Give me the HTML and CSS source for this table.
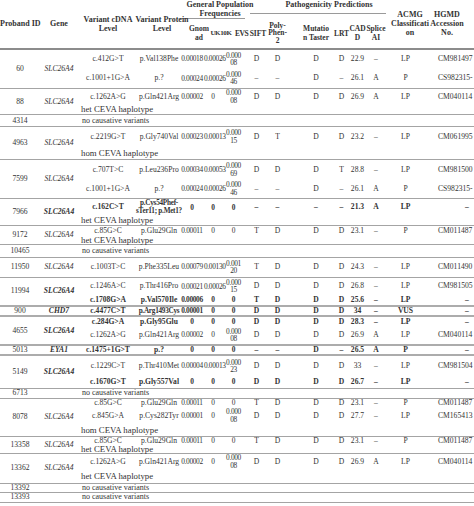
FILE: index.html
```html
<!DOCTYPE html>
<html>
<head>
<meta charset="utf-8">
<link rel="stylesheet" href="styles.css">
</head>
<body>
<table class="tbl">
<colgroup>
<col class="w40"><col class="w38"><col class="w60"><col class="w42"><col class="w24"><col class="w18"><col class="w23"><col class="w23"><col class="w30"><col class="w36"><col class="w15"><col class="w17"><col class="w20"><col class="w39"><col class="w85">
</colgroup>
<thead>
<tr class="h1">
<th rowspan="2">Proband ID</th>
<th rowspan="2">Gene</th>
<th rowspan="2">Variant cDNA<br>Level</th>
<th rowspan="2" class="pl6"><div class="ov"><span>Variant Protein<br>Level</span></div></th>
<th colspan="3" class="grp pl15"><div class="ov"><span>General Population<br>Frequencies</span></div></th>
<th colspan="6" class="top"><div class="pgrp"><div class="ov"><span>Pathogenicity Predictions</span></div></div></th>
<th rowspan="2" class="pl9"><div class="ov"><span>ACMG<br>Classificati<br>on</span></div></th>
<th rowspan="2" class="pr41">HGMD<br>Accession<br>No.</th>
</tr>
<tr class="h2">
<th class="pl14 sm"><div class="ov"><span>Gnom<br>ad</span></div></th>
<th class="pl16 uk"><div class="ov"><span>UK10K</span></div></th>
<th class="pl13 sm ev">EVS</th>
<th class="sm pl3">SIFT</th>
<th class="pr11 tight sm"><div class="ov"><span>Poly-<br>Phen-<br>2</span></div></th>
<th class="sm">Mutatio<br>n Taster</th>
<th class="sm"><div class="ov"><span>LRT</span></div></th>
<th class="sm"><div class="ov"><span>CAD<br>D</span></div></th>
<th class="sm"><div class="ov"><span>Splice<br>AI</span></div></th>
</tr>
</thead>
<tbody>
<tr class="g r20"><td rowspan="2">60</td><td rowspan="2"><i>SLC26A4</i></td><td>c.412G&gt;T</td><td>p.Val138Phe</td><td class="f">0.00018</td><td class="f">0.00026</td><td class="f">0.000<br>08</td><td>D</td><td class="pr11">D</td><td>D</td><td>D</td><td>22.9</td><td>–</td><td>LP</td><td class="id">CM981497</td></tr>
<tr class="r20"><td>c.1001+1G&gt;A</td><td>p.?</td><td class="f">0.00024</td><td class="f">0.00026</td><td class="f">0.000<br>46</td><td>–</td><td class="pr11">–</td><td>D</td><td>–</td><td>26.1</td><td>A</td><td>P</td><td class="id">CS982315-</td></tr>

<tr class="g r16"><td rowspan="2">88</td><td rowspan="2"><i>SLC26A4</i></td><td>c.1262A&gt;G</td><td>p.Gln421Arg</td><td class="f">0.00002</td><td class="f">0</td><td class="f">0.000<br>08</td><td>D</td><td class="pr11">D</td><td>D</td><td>D</td><td>26.9</td><td>A</td><td>LP</td><td class="id">CM040114</td></tr>
<tr class="r10"><td colspan="13" class="hap">het CEVA haplotype</td></tr>

<tr class="g r12"><td>4314</td><td></td><td colspan="13" class="none">no causative variants</td></tr>

<tr class="g r20"><td rowspan="2">4963</td><td rowspan="2"><i>SLC26A4</i></td><td>c.2219G&gt;T</td><td>p.Gly740Val</td><td class="f">0.00023</td><td class="f">0.00013</td><td class="f">0.000<br>15</td><td>D</td><td class="pr11">T</td><td>D</td><td>D</td><td>23.2</td><td>–</td><td>LP</td><td class="id">CM061995</td></tr>
<tr class="r13"><td colspan="13" class="hap">hom CEVA haplotype</td></tr>

<tr class="g r20"><td rowspan="2">7599</td><td rowspan="2"><i>SLC26A4</i></td><td>c.707T&gt;C</td><td>p.Leu236Pro</td><td class="f">0.00034</td><td class="f">0.00053</td><td class="f">0.000<br>69</td><td>D</td><td class="pr11">D</td><td>D</td><td>T</td><td>28.8</td><td>–</td><td>LP</td><td class="id">CM981500</td></tr>
<tr class="r19"><td>c.1001+1G&gt;A</td><td>p.?</td><td class="f">0.00024</td><td class="f">0.00026</td><td class="f">0.000<br>46</td><td>–</td><td class="pr11">–</td><td>D</td><td>–</td><td>26.1</td><td>A</td><td>P</td><td class="id">CS982315-</td></tr>

<tr class="g r17 b"><td rowspan="2" class="nb">7966</td><td rowspan="2"><i>SLC26A4</i></td><td>c.162C&gt;T</td><td class="cond"><div class="ov"><span>p.Cys54Phef-<br>sTer11; p.Met1?</span></div></td><td class="f">0</td><td class="f">0</td><td class="f">0</td><td>–</td><td class="pr11">–</td><td>–</td><td>–</td><td>21.3</td><td>A</td><td>LP</td><td class="dash">–</td></tr>
<tr class="r10"><td colspan="13" class="hap">het CEVA haplotype</td></tr>

<tr class="g r10"><td rowspan="2">9172</td><td rowspan="2"><i>SLC26A4</i></td><td>c.85G&gt;C</td><td>p.Glu29Gln</td><td class="f">0.00011</td><td class="f">0</td><td class="f">0</td><td>T</td><td class="pr11">D</td><td>D</td><td>D</td><td>23.1</td><td>–</td><td>P</td><td class="id">CM011487</td></tr>
<tr class="r8"><td colspan="13" class="hap">het CEVA haplotype</td></tr>

<tr class="g r13"><td>10465</td><td></td><td colspan="13" class="none">no causative variants</td></tr>

<tr class="g r20"><td>11950</td><td><i>SLC26A4</i></td><td>c.1003T&gt;C</td><td>p.Phe335Leu</td><td class="f">0.00079</td><td class="f">0.00130</td><td class="f">0.001<br>20</td><td>T</td><td class="pr11">D</td><td>D</td><td>D</td><td>24.3</td><td>–</td><td>LP</td><td class="id">CM011490</td></tr>

<tr class="g r18"><td rowspan="2">11994</td><td rowspan="2" class="bi"><i>SLC26A4</i></td><td>c.1246A&gt;C</td><td>p.Thr416Pro</td><td class="f">0.00021</td><td class="f">0.00026</td><td class="f">0.000<br>15</td><td>D</td><td class="pr11">D</td><td>D</td><td>D</td><td>26.8</td><td>–</td><td>LP</td><td class="id">CM981505</td></tr>
<tr class="r11 b"><td>c.1708G&gt;A</td><td>p.Val570Ile</td><td class="f">0.00006</td><td class="f">0</td><td class="f">0</td><td>T</td><td class="pr11">D</td><td>D</td><td>D</td><td>25.6</td><td>–</td><td>LP</td><td class="dash">–</td></tr>

<tr class="gg r9 b"><td class="nb">900</td><td><i>CHD7</i></td><td>c.4477C&gt;T</td><td class="cond"><div class="ov"><span>p.Arg1493Cys</span></div></td><td class="f">0.00001</td><td class="f">0</td><td class="f">0</td><td>D</td><td class="pr11">D</td><td>D</td><td>D</td><td>34</td><td>–</td><td>VUS</td><td class="dash">–</td></tr>

<tr class="gg r10 b"><td rowspan="2" class="nb">4655</td><td rowspan="2"><i>SLC26A4</i></td><td>c.284G&gt;A</td><td>p.Gly95Glu</td><td class="f">0</td><td class="f">0</td><td class="f">0</td><td>D</td><td class="pr11">D</td><td>D</td><td>D</td><td>28.3</td><td>–</td><td>LP</td><td class="dash">–</td></tr>
<tr class="r19"><td>c.1262A&gt;G</td><td>p.Gln421Arg</td><td class="f">0.00002</td><td class="f">0</td><td class="f">0.000<br>08</td><td>D</td><td class="pr11">D</td><td>D</td><td>D</td><td>26.9</td><td>A</td><td>LP</td><td class="id">CM040114</td></tr>

<tr class="gg r9 b"><td class="nb">5013</td><td><i>EYA1</i></td><td>c.1475+1G&gt;T</td><td>p.?</td><td class="f">0</td><td class="f">0</td><td class="f">0</td><td>–</td><td class="pr11">–</td><td>D</td><td>–</td><td>26.5</td><td>A</td><td>P</td><td class="dash">–</td></tr>

<tr class="gg r21"><td rowspan="2">5149</td><td rowspan="2" class="bi"><i>SLC26A4</i></td><td>c.1229C&gt;T</td><td>p.Thr410Met</td><td class="f">0.00004</td><td class="f">0.00013</td><td class="f">0.000<br>23</td><td>D</td><td class="pr11">D</td><td>D</td><td>D</td><td>33</td><td>–</td><td>LP</td><td class="id">CM981504</td></tr>
<tr class="r12 b"><td>c.1670G&gt;T</td><td>p.Gly557Val</td><td class="f">0</td><td class="f">0</td><td class="f">0</td><td>D</td><td class="pr11">D</td><td>D</td><td>D</td><td>26.7</td><td>–</td><td>LP</td><td class="dash">–</td></tr>

<tr class="g r10"><td>6713</td><td></td><td colspan="13" class="none">no causative variants</td></tr>

<tr class="g r9"><td rowspan="3">8078</td><td rowspan="3"><i>SLC26A4</i></td><td>c.85G&gt;C</td><td>p.Glu29Gln</td><td class="f">0.00011</td><td class="f">0</td><td class="f">0</td><td>T</td><td class="pr11">D</td><td>D</td><td>D</td><td>23.1</td><td>–</td><td>P</td><td class="id">CM011487</td></tr>
<tr class="r17"><td>c.845G&gt;A</td><td>p.Cys282Tyr</td><td class="f">0.00001</td><td class="f">0</td><td class="f">0.000<br>08</td><td>D</td><td class="pr11">D</td><td>D</td><td>D</td><td>27.7</td><td>–</td><td>LP</td><td class="id">CM165413</td></tr>
<tr class="r12"><td colspan="13" class="hap">hom CEVA haplotype</td></tr>

<tr class="g r8"><td rowspan="2">13358</td><td rowspan="2"><i>SLC26A4</i></td><td>c.85G&gt;C</td><td>p.Glu29Gln</td><td class="f">0.00011</td><td class="f">0</td><td class="f">0</td><td>T</td><td class="pr11">D</td><td>D</td><td>D</td><td>23.1</td><td>–</td><td>P</td><td class="id">CM011487</td></tr>
<tr class="r8"><td colspan="13" class="hap">het CEVA haplotype</td></tr>

<tr class="g r17"><td rowspan="2">13362</td><td rowspan="2"><i>SLC26A4</i></td><td>c.1262A&gt;G</td><td>p.Gln421Arg</td><td class="f">0.00002</td><td class="f">0</td><td class="f">0.000<br>08</td><td>D</td><td class="pr11">D</td><td>D</td><td>D</td><td>26.9</td><td>A</td><td>LP</td><td class="id">CM040114</td></tr>
<tr class="r13"><td colspan="13" class="hap">het CEVA haplotype</td></tr>

<tr class="g r8"><td>13392</td><td></td><td colspan="13" class="none">no causative variants</td></tr>
<tr class="g r10 last"><td>13393</td><td></td><td colspan="13" class="none">no causative variants</td></tr>
</tbody>
</table>
</body>
</html>
```
FILE: styles.css
```css
html, body {
  margin: 0;
  padding: 0;
  background: #ffffff;
  overflow: hidden;
  width: 474px;
  height: 506px;
}
.tbl {
  border-collapse: collapse;
  table-layout: fixed;
  width: 510px;
  font-family: "Liberation Serif", "Times New Roman", serif;
  font-size: 7.6px;
  line-height: 8px;
  color: #333333;
}
.tbl th, .tbl td {
  padding: 0;
  text-align: center;
  vertical-align: middle;
  white-space: nowrap;
}
.tbl th {
  font-weight: bold;
  font-size: 8px;
  line-height: 9px;
}
.tbl th.sm { font-size: 7.5px; }
.tbl th.uk { font-size: 7px; letter-spacing: -0.35px; }
.tbl th.ev { letter-spacing: -0.5px; }
.w40 { width: 40px; }
.w38 { width: 38px; }
.w60 { width: 60px; }
.w42 { width: 42px; }
.w24 { width: 24px; }
.w18 { width: 18px; }
.w23 { width: 23px; }
.w30 { width: 30px; }
.w36 { width: 36px; }
.w15 { width: 15px; }
.w17 { width: 17px; }
.w20 { width: 20px; }
.w39 { width: 39px; }
.w85 { width: 85px; }

.ov {
  display: flex;
  justify-content: center;
  white-space: nowrap;
}
.ov span { text-align: center; }

.tbl .pl3 { padding-left: 3px; }
.tbl .pl6 { padding-left: 6px; }
.tbl .pl9 { padding-left: 9px; }
.tbl .pl13 { padding-left: 13px; }
.tbl .pl14 { padding-left: 14px; }
.tbl .pl15 { padding-left: 15px; }
.tbl .pl16 { padding-left: 16px; }
.tbl .pr11 { padding-right: 11px; }
.tbl .pr41 { padding-right: 41px; }

.h1 { height: 18px; }
.h2 { height: 30px; }
.h2 th { border-bottom: 2px solid #8c8c8c; }
.h1 th[rowspan] { border-bottom: 2px solid #8c8c8c; }
.tbl th.grp { border-bottom: 1px solid #9a9a9a; }
.tbl th.top { vertical-align: top; padding-left: 5px; }
.pgrp {
  height: 13px;
  padding-left: 22px;
  border-bottom: 1px solid #9a9a9a;
}
.tbl th.tight { line-height: 7.5px; }

.g { border-top: 1px solid #a4a4a4; }
.gg { border-top: 2px solid #acacac; }
.last { border-bottom: 1px solid #a4a4a4; }
.b td { font-weight: bold; }
.tbl td.nb { font-weight: normal; }
.tbl td.bi { font-weight: bold; }
.tbl td.cond { letter-spacing: -0.25px; font-size: 7.2px; }
.tbl td.f { font-size: 7.4px; letter-spacing: -0.35px; line-height: 7.5px; }

.tbl td.hap {
  text-align: left;
  padding-left: 3px;
  font-size: 8.8px;
}
.tbl td.none {
  text-align: left;
  padding-left: 4px;
  font-size: 8px;
}
.tbl td.id { text-align: left; padding-left: 13px; }
.tbl td.dash { text-align: left; padding-left: 40px; }

.r8 { height: 8px; }
.r9 { height: 9px; }
.r10 { height: 10px; }
.r11 { height: 11px; }
.r12 { height: 12px; }
.r13 { height: 13px; }
.r16 { height: 16px; }
.r17 { height: 17px; }
.r18 { height: 18px; }
.r19 { height: 19px; }
.r20 { height: 20px; }
.r21 { height: 21px; }
```
